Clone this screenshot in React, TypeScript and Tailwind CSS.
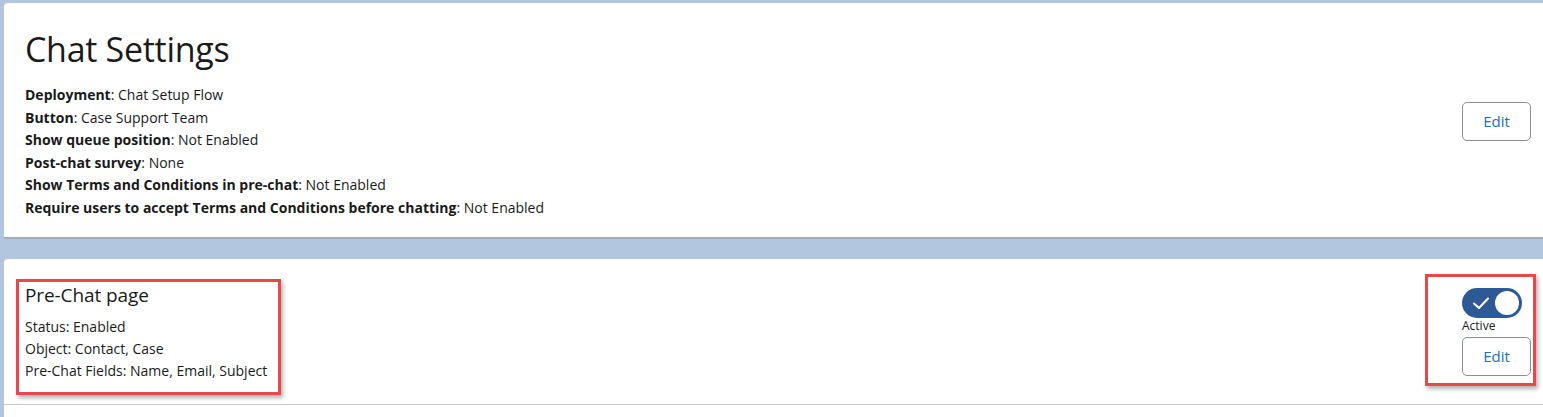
import React from "react";

const settings: [string, string][] = [
  ["Deployment", "Chat Setup Flow"],
  ["Button", "Case Support Team"],
  ["Show queue position", "Not Enabled"],
  ["Post-chat survey", "None"],
  ["Show Terms and Conditions in pre-chat", "Not Enabled"],
  ["Require users to accept Terms and Conditions before chatting", "Not Enabled"],
];

function EditButton() {
  return (
    <button className="w-[69px] h-[39px] rounded-[5px] border border-[#8a8f96] bg-white text-[15px] text-[#1a6fbd] flex items-center justify-center">
      Edit
    </button>
  );
}

function Toggle() {
  return (
    <div className="w-[60px] h-[30px] rounded-full bg-[#2d5a96] flex items-center justify-between pl-[10px] pr-[3px]">
      <svg width="18" height="14" viewBox="0 0 18 14" fill="none">
        <path d="M2 7.5 L7 12 L16 2.5" stroke="white" strokeWidth="2" strokeLinecap="round" strokeLinejoin="round" />
      </svg>
      <div className="w-[24px] h-[24px] rounded-full bg-white" />
    </div>
  );
}

export default function App() {
  return (
    <div
      className="w-[1543px] h-[417px] overflow-hidden bg-[#b2c6df] pt-[3px] pl-[4px] text-[#1a1a1a]"
      style={{ fontFamily: '"Open Sans", "Noto Sans", sans-serif' }}
    >
      <div className="flex flex-col gap-[20px]">
        {/* Chat settings card */}
        <section className="h-[236px] bg-white rounded-tl-[4px] border-b-[2px] border-[#a3adb8] flex justify-between pl-[21px] pr-[12px]">
          <div className="pt-[25px]">
            <h1 className="text-[34px] leading-[42px] font-normal tracking-[-0.3px]">Chat Settings</h1>
            <div className="mt-[14px] text-[14px] leading-[22.5px]">
              {settings.map(([k, v]) => (
                <div key={k}>
                  <span className="font-bold">{k}</span>: {v}
                </div>
              ))}
            </div>
          </div>
          <div className="pt-[99px]">
            <EditButton />
          </div>
        </section>

        {/* Pre-chat page card */}
        <section className="h-[160px] bg-white rounded-tl-[4px] flex flex-col">
          <div className="flex justify-between pt-[20px] pl-[12px] pr-[7px]">
            <div className="border-[3px] border-[#e5484d] shadow-[2px_3px_4px_rgba(0,0,0,0.3)] w-[265px] h-[116px] pl-[6px]">
              <h2 className="text-[19px] leading-[26px] tracking-[-0.1px]">Pre-Chat page</h2>
              <div className="mt-[8px] text-[14px] leading-[22px]">
                <div>Status: Enabled</div>
                <div>Object: Contact, Case</div>
                <div>Pre-Chat Fields: Name, Email, Subject</div>
              </div>
            </div>
            <div className="-mt-[5px] border-[3px] border-[#e5484d] shadow-[2px_3px_4px_rgba(0,0,0,0.3)] w-[111px] h-[112px] pl-[34px] pt-[11px] flex flex-col">
              <Toggle />
              <span className="text-[12px] leading-[16px]">Active</span>
              <div className="mt-[3px]">
                <EditButton />
              </div>
            </div>
          </div>
          <div className="mt-auto mb-[14px] h-px bg-[#c9c9c9]" />
        </section>
      </div>
    </div>
  );
}
